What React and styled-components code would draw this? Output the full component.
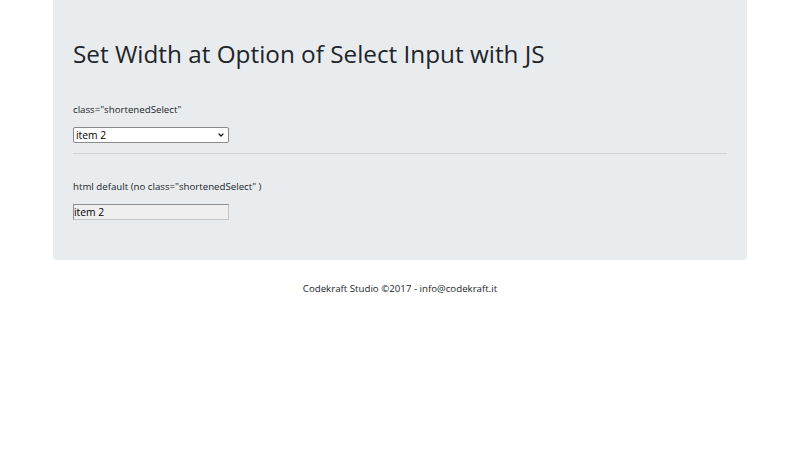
import React from "react";
import styled, { createGlobalStyle } from "styled-components";

const Global = createGlobalStyle`
  html, body { margin: 0; padding: 0; background: #fff; }
  body { font-family: "Open Sans", "Noto Sans", sans-serif; color: #212529; }
`;

const Container = styled.div`
  width: 694px;
  margin: 0 auto;
`;

const Jumbotron = styled.div`
  background: #e9ecef;
  border-radius: 0 0 4px 4px;
  padding: 39px 20px 40px;
`;

const Title = styled.h1`
  margin: 0 0 34px;
  font-size: 24.3px;
  font-weight: 400;
  line-height: 29px;
`;

const Section = styled.div`
  display: flex;
  flex-direction: column;
  align-items: flex-start;
  gap: 9px;
`;

const Label = styled.p`
  margin: 0;
  font-size: 9.7px;
  line-height: 16px;
`;

const SelectWrap = styled.div`
  position: relative;
  width: 156px;
  height: 16px;
`;

const Chevron = styled.svg`
  position: absolute;
  right: 5px;
  top: 6px;
  width: 6px;
  height: 4px;
  pointer-events: none;
`;

const Select = styled.select`
  appearance: none;
  -webkit-appearance: none;
  box-sizing: border-box;
  display: block;
  width: 156px;
  height: 16px;
  font-family: "Open Sans", "Noto Sans", sans-serif;
  font-size: 10.3px;
  line-height: 14px;
  padding: 0 0 0 2px;
  margin: 0;
  border: 1px solid #8a8a8a;
  border-radius: 2px;
  background: #fff;
  color: #000;
  outline: none;
  ${(p) =>
    p.$plain &&
    `
    padding-left: 0;
    background: #efefef;
    border-radius: 0;
    border-color: #8d8d8d #c4c4c4 #c4c4c4 #8d8d8d;
  `}
`;

const Rule = styled.hr`
  margin: 10px 0 25px;
  border: 0;
  border-top: 1px solid rgba(0, 0, 0, 0.1);
`;

const Footer = styled.footer`
  text-align: center;
  font-size: 9.7px;
  line-height: 16px;
  padding-top: 21px;
`;

const Options = () => (
  <>
    <option value="1">item 1</option>
    <option value="2">item 2</option>
    <option value="3">item 3</option>
  </>
);

export default function App() {
  return (
    <>
      <Global />
      <Container>
        <Jumbotron>
          <Title>Set Width at Option of Select Input with JS</Title>
          <Section>
            <Label>class="shortenedSelect"</Label>
            <SelectWrap>
              <Select defaultValue="2">
                <Options />
              </Select>
              <Chevron viewBox="0 0 6 4">
                <path d="M0.6 0.6 L3 3 L5.4 0.6" fill="none" stroke="#111" strokeWidth="1.3" />
              </Chevron>
            </SelectWrap>
          </Section>
          <Rule />
          <Section>
            <Label>html default (no class="shortenedSelect" )</Label>
            <Select $plain defaultValue="2">
              <Options />
            </Select>
          </Section>
        </Jumbotron>
        <Footer>Codekraft Studio ©2017 - info@codekraft.it</Footer>
      </Container>
    </>
  );
}
